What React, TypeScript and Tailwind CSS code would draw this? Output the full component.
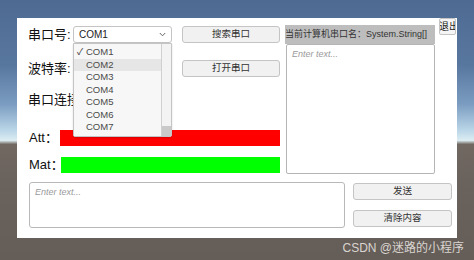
const font = "font-['Liberation_Sans','Noto_Sans_CJK_SC',sans-serif]";

const ports = ["COM1", "COM2", "COM3", "COM4", "COM5", "COM6", "COM7"];

const UButton = ({ label, className = "" }: { label: string; className?: string }) => (
  <div
    className={`flex items-center justify-center h-[17px] rounded-[3px] border border-[#c4c4c4] bg-[#f1f1f1] text-[9.5px] text-[#333] ${className}`}
  >
    {label}
  </div>
);

const Placeholder = () => (
  <span className="block px-[5px] pt-[2px] text-[9px] italic text-[#9a9a9a] leading-[14px]">Enter text...</span>
);

const PortDropdown = () => (
  <div className="absolute left-[56px] top-[25px] w-[99px] h-[94px] flex bg-white border border-[#c4c4c4] rounded-b-[2px] shadow-[0_1px_2px_rgba(0,0,0,0.15)]">
    <div className="flex-1 pt-[2px] bg-[#f7f7f7]">
      {ports.map((p, i) => (
        <div
          key={p}
          className={`flex items-center h-[12.5px] text-[9.5px] text-[#4a4a4a] ${i === 1 ? "bg-[#e6e6e6]" : ""}`}
        >
          <span className="w-[12px] pl-[3px] text-[9px] text-[#333]">{i === 0 ? "✓" : ""}</span>
          <span>{p}</span>
        </div>
      ))}
    </div>
    <div className="w-[10px] border-l border-[#d0d0d0] bg-[#f3f3f3] flex flex-col justify-end">
      <div className="h-[10px] bg-[#c9c9c9]" />
    </div>
  </div>
);

export default function App() {
  return (
    <div
      className={`${font} w-[474px] h-[260px] overflow-hidden pt-[18px] pl-[17px] bg-[linear-gradient(to_bottom,#4e6a93_0%,#58779f_25%,#7b9cc1_40%,#b9d5e7_50%,#dcedf2_54%,#706861_55.5%,#6a625c_70%,#655d57_100%)]`}
    >
      <div className="relative w-[440px] h-[220px] bg-white">
        <div className="flex pl-[11px] pt-[8px]">
          <div className="w-[252px] flex flex-col">
            <div className="flex items-center h-[17px]">
              <span className="w-[45px] text-[13px] text-[#111]">串口号:</span>
              <div className="w-[99px] h-[17px] flex items-center justify-between px-[5px] bg-white border border-[#c4c4c4] rounded-[3px]">
                <span className="text-[10px] text-[#222]">COM1</span>
                <svg width="7" height="5" viewBox="0 0 7 5">
                  <path d="M0.8 1 L3.5 3.8 L6.2 1" fill="none" stroke="#666" strokeWidth="1" />
                </svg>
              </div>
              <UButton label="搜索串口" className="ml-[10px] w-[98px]" />
            </div>
            <div className="flex items-center h-[17px] mt-[17px]">
              <span className="w-[154px] text-[13px] text-[#111]">波特率:</span>
              <UButton label="打开串口" className="w-[98px]" />
            </div>
            <div className="flex items-center h-[20px] mt-[13px]">
              <span className="text-[13px] text-[#111]">串口连接</span>
            </div>
            <div className="flex items-center h-[16px] mt-[20px]">
              <span className="w-[32px] pl-[1px] text-[13px] text-[#111]">Att：</span>
              <div className="w-[221px] h-[16px] bg-[#ff0000]" />
            </div>
            <div className="flex items-center h-[16px] mt-[11px]">
              <span className="w-[33px] pl-[1px] text-[13px] text-[#111]">Mat：</span>
              <div className="w-[220px] h-[16px] bg-[#00ff00]" />
            </div>
          </div>
          <div className="ml-[5px] -mt-[1px] w-[150px] flex flex-col">
            <div className="h-[19px] bg-[#bdbdbd] flex items-center whitespace-nowrap text-[9px] text-[#333]">
              当前计算机串口名：System.String[]
            </div>
            <div className="ml-[1px] h-[130px] border border-[#b5b5b5] rounded-[2px] bg-white">
              <Placeholder />
            </div>
          </div>
        </div>
        <div className="flex pl-[12px] mt-[8px]">
          <div className="w-[316px] h-[46px] border border-[#b8b8b8] rounded-[3px] bg-white">
            <Placeholder />
          </div>
          <div className="ml-[8px] w-[99px] flex flex-col">
            <UButton label="发送" className="mt-[1px]" />
            <UButton label="清除内容" className="mt-[10px]" />
          </div>
        </div>
        <div className="absolute top-0 right-[1px] w-[17px] h-[17px] overflow-hidden flex items-center justify-start border border-[#c4c4c4] rounded-[2px] bg-[#f5f5f5]">
          <span className="whitespace-nowrap text-[10px] text-[#222] -ml-[1px]">退出</span>
        </div>
        <PortDropdown />
      </div>
      <div className="w-[447px] mt-[2px] text-right text-[12px] leading-[16px] text-[#d9d5d1]">CSDN @迷路的小程序</div>
    </div>
  );
}
